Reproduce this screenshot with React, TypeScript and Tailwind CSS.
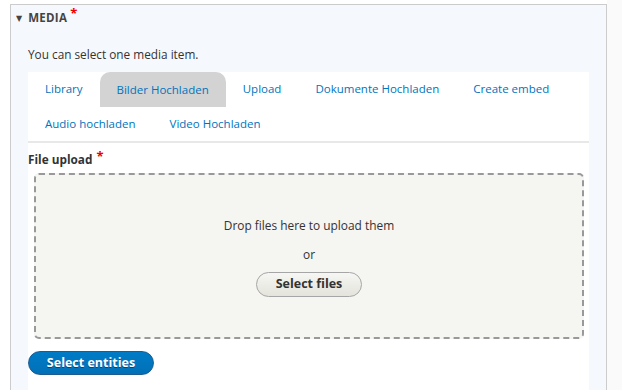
import React from 'react';

const tabs = [
    { label: 'Library' },
    { label: 'Bilder Hochladen', active: true },
    { label: 'Upload' },
    { label: 'Dokumente Hochladen' },
    { label: 'Create embed' },
    { label: 'Audio hochladen' },
    { label: 'Video Hochladen' },
];

export default function App() {
    return (
        <div
            className="w-[622px] h-[390px] overflow-hidden bg-white flex text-[#333] text-[11.5px]"
            style={{ fontFamily: '"Open Sans", "DejaVu Sans", sans-serif' }}
        >
            {/* Media fieldset */}
            <div className="ml-[10px] mt-[4px] w-[597px] shrink-0 border border-b-0 border-[#cccccc] bg-[#f5f9fd]">
                <div className="flex items-center h-[24px] pl-[5px] pt-[1px]">
                    <span className="text-[8px] leading-none mr-[6px] text-[#444]">▼</span>
                    <span className="font-bold text-[11.5px] text-[#444] tracking-[0.3px]">MEDIA</span>
                    <span className="text-[#e00] font-bold text-[13px] leading-none ml-[3px] -mt-[8px]">*</span>
                </div>

                <p className="ml-[17px] mt-[17px] leading-[16px] text-[11.8px]">You can select one media item.</p>

                <div className="ml-[17px] mr-[17px] mt-[10px] bg-white h-[320px]">
                    {/* Tabs */}
                    <div className="flex flex-wrap border-b-2 border-[#e8e8e8]">
                        {tabs.map((t) => (
                            <div
                                key={t.label}
                                className={
                                    t.active
                                        ? 'h-[35px] px-[17px] flex items-center rounded-t-[10px] bg-[#d3d3d3] text-[#0074bd]'
                                        : 'h-[34px] px-[17px] flex items-center text-[#0074bd]'
                                }
                            >
                                {t.label}
                            </div>
                        ))}
                    </div>

                    {/* File upload */}
                    <div className="mt-[8px] leading-[16px] font-bold flex items-start text-[11.8px]">
                        File upload
                        <span className="text-[#e00] text-[13px] leading-none ml-[4px] -mt-[1px]">*</span>
                    </div>

                    <div className="ml-[6px] mr-[5px] mt-[6px] h-[166px] rounded-[5px] border-2 border-dashed border-[#999] bg-[#f5f5f2] flex flex-col items-center text-[11.9px]">
                        <p className="mt-[42px] leading-[16px]">Drop files here to upload them</p>
                        <p className="mt-[13px] leading-[16px]">or</p>
                        <button className="mt-[10px] h-[25px] w-[106px] rounded-full border border-[#a6a6a6] bg-gradient-to-b from-[#f6f6f3] to-[#e4e4dc] font-bold text-[12.5px] text-[#333]">
                            Select files
                        </button>
                    </div>

                    <button className="mt-[12px] h-[24px] w-[126px] rounded-full border border-[#1e5c90] bg-gradient-to-b from-[#007bc6] to-[#0071b8] text-white font-bold text-[12.5px] [text-shadow:0_1px_0_rgba(0,0,0,0.4)]">
                        Select entities
                    </button>
                </div>
            </div>
            <div className="flex-1 bg-[#fafafa]" />
        </div>
    );
}
